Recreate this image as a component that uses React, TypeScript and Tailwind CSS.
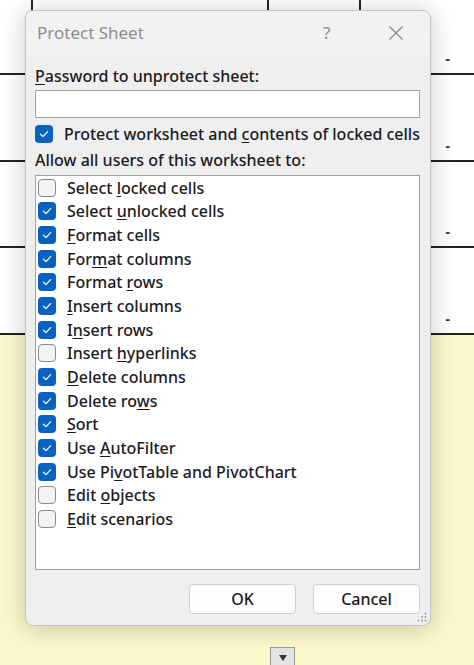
import React from "react";

const F = { fontFamily: '"Noto Sans", "Open Sans", sans-serif' };

type Item = { pre: string; key: string; post: string; checked: boolean };

const items: Item[] = [
  { pre: "Select ", key: "l", post: "ocked cells", checked: false },
  { pre: "Select ", key: "u", post: "nlocked cells", checked: true },
  { pre: "", key: "F", post: "ormat cells", checked: true },
  { pre: "For", key: "m", post: "at columns", checked: true },
  { pre: "Format ", key: "r", post: "ows", checked: true },
  { pre: "", key: "I", post: "nsert columns", checked: true },
  { pre: "I", key: "n", post: "sert rows", checked: true },
  { pre: "Insert ", key: "h", post: "yperlinks", checked: false },
  { pre: "", key: "D", post: "elete columns", checked: true },
  { pre: "Delete ro", key: "w", post: "s", checked: true },
  { pre: "", key: "S", post: "ort", checked: true },
  { pre: "Use ", key: "A", post: "utoFilter", checked: true },
  { pre: "Use Pi", key: "v", post: "otTable and PivotChart", checked: true },
  { pre: "Edit ", key: "o", post: "bjects", checked: false },
  { pre: "", key: "E", post: "dit scenarios", checked: false },
];

function Check({ checked }: { checked: boolean }) {
  if (checked) {
    return (
      <span className="flex h-[18px] w-[18px] shrink-0 items-center justify-center rounded-[4px] bg-[#0a62c0]">
        <svg width="12" height="12" viewBox="0 0 12 12" fill="none">
          <path d="M2.5 6.2 L5 8.6 L9.6 3.6" stroke="white" strokeWidth="1.2" strokeLinecap="round" strokeLinejoin="round" />
        </svg>
      </span>
    );
  }
  return <span className="block h-[18px] w-[18px] shrink-0 rounded-[4px] border border-[#8b8b8b] bg-[#f4f4f4]" />;
}

function Dash() {
  return <span className="absolute bottom-[7px] right-[24px] text-[14px] font-bold leading-none text-[#333]">-</span>;
}

export default function App() {
  return (
    <div className="relative h-[665px] w-[474px] overflow-hidden bg-white" style={F}>
      {/* spreadsheet background */}
      <div className="flex h-full flex-col">
        <div className="relative flex h-[75px] shrink-0 border-b-2 border-[#222]">
          <div className="w-[33px] shrink-0 border-r-2 border-[#222]" />
          <div className="w-[236px] shrink-0 border-r-2 border-[#222]" />
          <div className="w-[92px] shrink-0 border-r-2 border-[#222]" />
          <div className="flex-1" />
          <Dash />
        </div>
        <div className="relative h-[87px] shrink-0 border-b-2 border-[#222]">
          <Dash />
        </div>
        <div className="relative h-[86px] shrink-0 border-b-2 border-[#222]">
          <Dash />
        </div>
        <div className="relative h-[87px] shrink-0 border-b-2 border-[#222]">
          <Dash />
        </div>
        <div className="relative flex-1 bg-[#fbf8cb]">
          <div className="absolute left-[270px] top-[312px] flex h-[20px] w-[25px] items-start justify-center border border-[#9a9a9a] bg-[#e4e4e4] pt-[6px]">
            <svg width="10" height="8" viewBox="0 0 10 8">
              <path d="M1 1 H9 L5 7 Z" fill="#333" />
            </svg>
          </div>
        </div>
      </div>

      {/* dialog */}
      <div className="absolute left-[25px] top-[10px] flex h-[616px] w-[406px] flex-col rounded-[8px] border border-[#c4c4c4] bg-[#efefef] shadow-[0_2px_24px_rgba(0,0,0,0.22)]">
        <div className="relative flex h-[44px] shrink-0 items-center rounded-t-[8px] bg-[#f2f2f2] pl-[11px]">
          <span className="text-[17px] text-[#8d8d8d]">Protect Sheet</span>
          <span className="absolute left-[297px] top-[9px] text-[17px] text-[#8d8d8d]">?</span>
          <svg className="absolute left-[362px] top-[14px]" width="16" height="16" viewBox="0 0 16 16">
            <path d="M1.5 1.5 L14.5 14.5 M14.5 1.5 L1.5 14.5" stroke="#8a8a8a" strokeWidth="1.3" />
          </svg>
        </div>

        <div className="flex flex-1 flex-col pl-[9px] pr-[10px] text-[16px] font-medium leading-[20px] text-[#1c1a1f]">
          <div className="mt-[11px] h-[20px]">
            <span className="underline underline-offset-2">P</span>assword to unprotect sheet:
          </div>
          <div className="mt-[4px] h-[28px] border border-[#a0a0a0] bg-white" />
          <div className="mt-[6px] flex h-[20px] items-center">
            <Check checked />
            <span className="ml-[11px]">
              Protect worksheet and <span className="underline underline-offset-2">c</span>ontents of locked cells
            </span>
          </div>
          <div className="mt-[6px] h-[20px]">Allow all users of this worksheet to:</div>
          <div className="mt-[5px] flex h-[395px] flex-col border border-[#a0a0a0] bg-white pl-[2px]">
            {items.map((it, i) => (
              <div key={i} className="flex h-[23.65px] shrink-0 items-center">
                <Check checked={it.checked} />
                <span className="ml-[11px]">
                  {it.pre}
                  <span className="underline underline-offset-2">{it.key}</span>
                  {it.post}
                </span>
              </div>
            ))}
          </div>
          <div className="mt-[14px] flex justify-end gap-[17px]">
            <button className="h-[30px] w-[107px] rounded-[4px] border border-[#cfcfcf] bg-[#fdfdfd] text-[16px] font-medium text-[#1c1a1f]">OK</button>
            <button className="h-[30px] w-[107px] rounded-[4px] border border-[#cfcfcf] bg-[#fdfdfd] text-[16px] font-medium text-[#1c1a1f]">Cancel</button>
          </div>
        </div>
        <svg className="absolute bottom-[3px] right-[3px]" width="10" height="10" viewBox="0 0 10 10">
          <circle cx="8.5" cy="1.5" r="0.9" fill="#9a9a9a" />
          <circle cx="5" cy="5" r="0.9" fill="#9a9a9a" />
          <circle cx="8.5" cy="5" r="0.9" fill="#9a9a9a" />
          <circle cx="1.5" cy="8.5" r="0.9" fill="#9a9a9a" />
          <circle cx="5" cy="8.5" r="0.9" fill="#9a9a9a" />
          <circle cx="8.5" cy="8.5" r="0.9" fill="#9a9a9a" />
        </svg>
      </div>
    </div>
  );
}
